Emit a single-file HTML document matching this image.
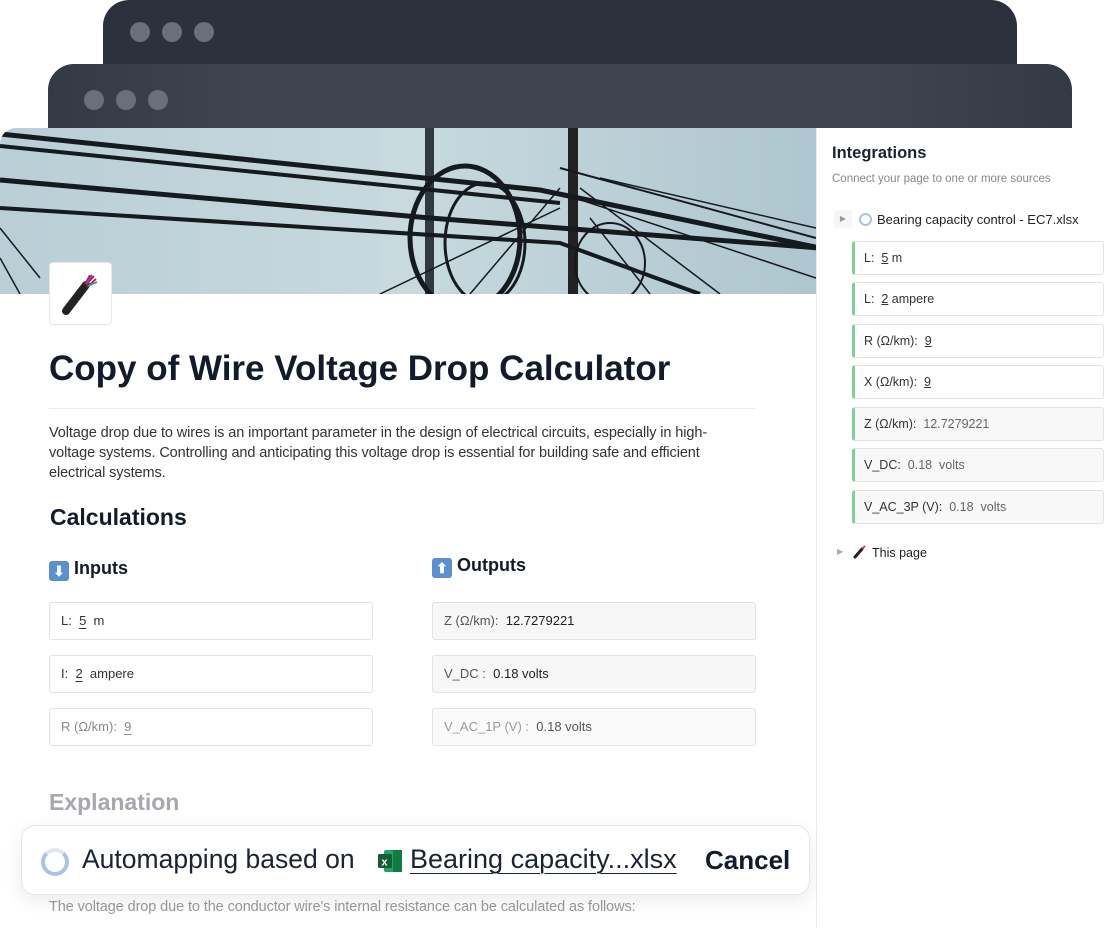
<!DOCTYPE html>
<html><head><meta charset="utf-8"><style>
*{margin:0;padding:0;box-sizing:border-box}
body{width:1120px;height:928px;background:#fff;position:relative;overflow:hidden;font-family:"Liberation Sans",sans-serif;color:#1a2233}
.abs{position:absolute}
.win1{left:103px;top:0;width:914px;height:140px;background:#2b303d;border-radius:26px 26px 0 0}
.win2{left:48px;top:64px;width:1024px;height:80px;background:linear-gradient(90deg,#343945,#3f4451 20%,#3f4451 80%,#343945);border-radius:26px 26px 0 0}
.dot{width:20px;height:20px;border-radius:50%;background:#6a6f7c;position:absolute}
.main{left:0;top:128px;width:816px;height:800px;background:#fff;border-radius:16px 0 0 0;overflow:hidden}
.side{left:816px;top:128px;width:304px;height:800px;background:#fff;border-left:1px solid #ececec}
.box{position:absolute;height:38px;border:1px solid #e3e3e3;border-radius:3px;font-size:13px;line-height:36px;padding-left:11px;color:#333;white-space:nowrap}
.box u{text-decoration:underline;text-underline-offset:3px}
.sb{position:absolute;left:35px;width:252px;height:34px;border:1px solid #e3e3e3;border-left:3px solid #7fcf9a;border-radius:3px;font-size:12.5px;line-height:32px;padding-left:9px;color:#333;white-space:nowrap}
.sb.g{background:#f8f8f8}
.sb .v{color:#666}
</style></head><body>
<div class="abs win1"><div class="dot" style="left:27px;top:22px"></div><div class="dot" style="left:59px;top:22px"></div><div class="dot" style="left:91px;top:22px"></div></div>
<div class="abs win2"><div class="dot" style="left:36px;top:26px"></div><div class="dot" style="left:68px;top:26px"></div><div class="dot" style="left:100px;top:26px"></div></div>

<div class="abs main">
 <svg width="816" height="166" style="position:absolute;left:0;top:0">
  <defs><linearGradient id="bg" x1="0" x2="1"><stop offset="0" stop-color="#b9ced6"/><stop offset=".5" stop-color="#c7d9de"/><stop offset="1" stop-color="#aec6cf"/></linearGradient></defs>
  <rect width="816" height="166" fill="url(#bg)"/>
  <rect x="380" y="0" width="60" height="166" fill="#c9dade"/>
  <rect x="425" y="0" width="9" height="166" fill="#2f3a40"/>
  <rect x="568" y="0" width="10" height="166" fill="#222"/>
  <g stroke="#151a1e" fill="none">
   <path d="M0 6 L540 62 L820 120" stroke-width="5"/>
   <path d="M0 18 L560 75" stroke-width="4"/>
   <path d="M0 52 L430 90 L820 120" stroke-width="5"/>
   <path d="M0 80 L560 115 L700 166" stroke-width="4"/>
   <path d="M560 40 L816 110" stroke-width="2"/>
   <ellipse cx="465" cy="110" rx="55" ry="72" stroke-width="5"/>
   <ellipse cx="485" cy="115" rx="40" ry="60" stroke-width="3"/>
   <ellipse cx="610" cy="135" rx="35" ry="40" stroke-width="2"/>
   <path d="M560 60 L470 166 M580 60 L720 166 M575 70 L816 150 M560 80 L380 166 M590 90 L650 166 M600 50 L816 100" stroke-width="1.5"/>
   <path d="M0 100 L40 150 M0 130 L20 166" stroke-width="1.5"/>
  </g>
 </svg>
 <div class="abs" style="left:49px;top:134px;width:63px;height:63px;background:#fff;border:1px solid #e6e6e6;border-radius:4px">
  <svg width="63" height="63"><path d="M16 48 L36 22" stroke="#222" stroke-width="8" stroke-linecap="round"/><path d="M36 22 L44 13 M37 24 L46 16 M35 21 L40 12" stroke="#e04" stroke-width="1.8"/><path d="M38 23 L47 19" stroke="#2a8" stroke-width="1.8"/><path d="M36 21 L42 12" stroke="#36c" stroke-width="1.8"/></svg>
 </div>
 <div class="abs" style="left:49px;top:221px;font-size:35px;font-weight:bold;color:#121a2b;white-space:nowrap">Copy of Wire Voltage Drop Calculator</div>
 <div class="abs" style="left:49px;top:280px;width:707px;height:1px;background:#ececec"></div>
 <div class="abs" style="left:49px;top:295px;font-size:14.5px;line-height:20px;color:#333;white-space:nowrap;letter-spacing:-0.1px">Voltage drop due to wires is an important parameter in the design of electrical circuits, especially in high-<br>voltage systems. Controlling and anticipating this voltage drop is essential for building safe and efficient<br>electrical systems.</div>
 <div class="abs" style="left:50px;top:376px;font-size:23px;font-weight:bold;color:#121a2b">Calculations</div>
 <div class="abs" style="left:49px;top:430px;font-size:18px;font-weight:bold;color:#121a2b"><span style="display:inline-block;width:20px;height:20px;background:#5a8fd0;border-radius:3px;color:#fff;font-size:14px;text-align:center;line-height:20px;vertical-align:-2px">⬇</span> Inputs</div>
 <div class="abs" style="left:432px;top:427px;font-size:18px;font-weight:bold;color:#121a2b"><span style="display:inline-block;width:20px;height:20px;background:#5a8fd0;border-radius:3px;color:#fff;font-size:14px;text-align:center;line-height:20px;vertical-align:-2px">⬆</span> Outputs</div>
 <div class="box" style="left:49px;top:474px;width:324px">L:&nbsp; <u>5</u>&nbsp; m</div>
 <div class="box" style="left:49px;top:527px;width:324px">I:&nbsp; <u>2</u>&nbsp; ampere</div>
 <div class="box" style="left:49px;top:580px;width:324px;color:#888">R (Ω/km):&nbsp; <u>9</u></div>
 <div class="box" style="left:432px;top:474px;width:324px;background:#f7f7f7;color:#555">Z (Ω/km):&nbsp; <span style="color:#222">12.7279221</span></div>
 <div class="box" style="left:432px;top:527px;width:324px;background:#f7f7f7;color:#555">V_DC :&nbsp; <span style="color:#222">0.18 volts</span></div>
 <div class="box" style="left:432px;top:580px;width:324px;background:#fafafa;color:#999">V_AC_1P (V) :&nbsp; <span style="color:#555">0.18 volts</span></div>
 <div class="abs" style="left:49px;top:661px;font-size:23px;font-weight:bold;color:#a5a8ae">Explanation</div>
 <div class="abs" style="left:49px;top:771px;font-size:14.5px;color:#999;white-space:nowrap;letter-spacing:-0.1px">The voltage drop due to the conductor wire's internal resistance can be calculated as follows:</div>
</div>

<div class="abs side">
 <div class="abs" style="left:15px;top:16px;font-size:16.5px;font-weight:bold;color:#1a2233">Integrations</div>
 <div class="abs" style="left:15px;top:45px;font-size:11.5px;color:#888;white-space:nowrap">Connect your page to one or more sources</div>
 <div class="abs" style="left:17px;top:82px;width:18px;height:18px;background:#f6f6f6;border-radius:3px;font-size:8px;color:#999;line-height:18px;text-align:center">▶</div>
 <div class="abs" style="left:42px;top:85px;width:13px;height:13px;border:2px solid #a9c3e8;border-radius:50%"></div>
 <div class="abs" style="left:60px;top:84px;font-size:13px;color:#222;white-space:nowrap">Bearing capacity control - EC7.xlsx</div>
 <div class="sb" style="top:113px">L:&nbsp; <u>5</u> m</div>
 <div class="sb" style="top:154px">L:&nbsp; <u>2</u> ampere</div>
 <div class="sb" style="top:196px">R (Ω/km):&nbsp; <u>9</u></div>
 <div class="sb" style="top:237px">X (Ω/km):&nbsp; <u>9</u></div>
 <div class="sb g" style="top:279px">Z (Ω/km):&nbsp; <span class="v">12.7279221</span></div>
 <div class="sb g" style="top:320px">V_DC:&nbsp; <span class="v">0.18&nbsp; volts</span></div>
 <div class="sb g" style="top:362px">V_AC_3P (V):&nbsp; <span class="v">0.18&nbsp; volts</span></div>
 <div class="abs" style="left:20px;top:419px;font-size:8px;color:#aaa">▶</div>
 <svg class="abs" style="left:35px;top:417px" width="14" height="14"><path d="M3 12 L10 4" stroke="#222" stroke-width="3" stroke-linecap="round"/><path d="M10 4 L13 1" stroke="#e04" stroke-width="1.5"/></svg>
 <div class="abs" style="left:55px;top:418px;font-size:12.5px;color:#222">This page</div>
</div>

<div class="abs" style="left:21px;top:825px;width:789px;height:70px;background:#fff;border:1px solid #e6e6e6;border-radius:14px;box-shadow:0 6px 18px rgba(0,0,0,.08)">
 <div class="abs" style="left:19px;top:22px;width:28px;height:28px;border:4px solid #a9c3e8;border-top-color:#e4e8ee;border-radius:50%"></div>
 <div class="abs" style="left:60px;top:18px;font-size:26.5px;color:#1a2233;white-space:nowrap">Automapping based on</div>
 <svg class="abs" style="left:355px;top:23px" width="26" height="24"><rect x="7" y="1" width="18" height="22" rx="2" fill="#21a366"/><rect x="16" y="1" width="9" height="22" fill="#107c41"/><rect x="1" y="5" width="14" height="14" rx="1.5" fill="#185c37"/><text x="4.5" y="16.5" font-size="11" fill="#fff" font-family="Liberation Sans" font-weight="bold">x</text></svg>
 <div class="abs" style="left:388px;top:18px;font-size:27px;color:#1a2233;text-decoration:underline;text-underline-offset:5px;text-decoration-thickness:1px;white-space:nowrap">Bearing capacity...xlsx</div>
 <div class="abs" style="left:683px;top:19px;font-size:26px;font-weight:bold;color:#121a2b">Cancel</div>
</div>
</body></html>
